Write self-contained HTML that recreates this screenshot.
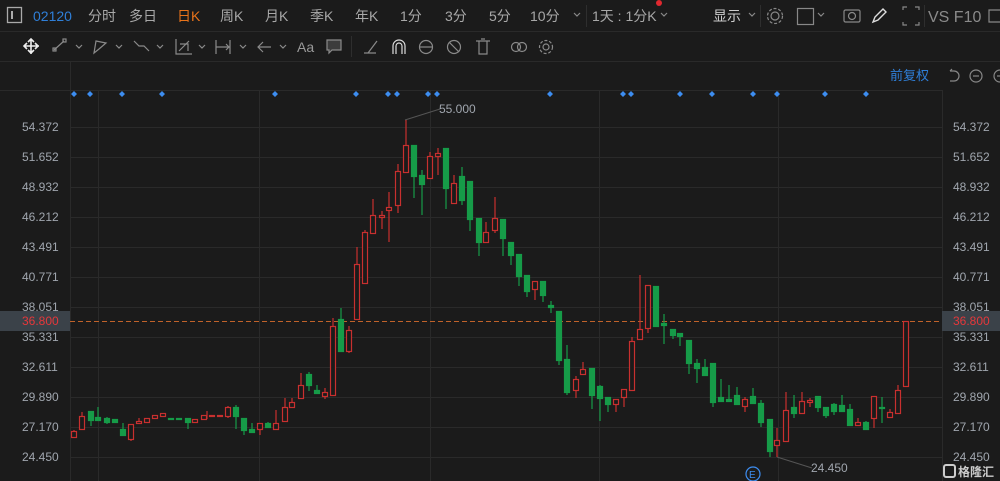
<!DOCTYPE html>
<html><head><meta charset="utf-8"><style>
html,body{margin:0;padding:0;background:#1b1b1b;width:1000px;height:481px;overflow:hidden}
body{font-family:"Liberation Sans","Noto Sans CJK SC",sans-serif}
svg{display:block}
</style></head><body>
<svg width="1000" height="481" viewBox="0 0 1000 481" xmlns="http://www.w3.org/2000/svg" font-family="Liberation Sans, Noto Sans CJK SC, sans-serif">
<rect width="1000" height="481" fill="#1b1b1b"/>
<line x1="0" y1="31.5" x2="1000" y2="31.5" stroke="#2a2a2a"/>
<line x1="0" y1="61.5" x2="1000" y2="61.5" stroke="#2a2a2a"/>
<rect x="7.5" y="7.5" width="14" height="15" fill="none" stroke="#aaa" stroke-width="1.3"/>
<line x1="12" y1="11" x2="12" y2="19" stroke="#ddd" stroke-width="1.5"/>
<g font-size="14" fill="#a8a8a8">
<text x="33" y="21" fill="#2f7fd8">02120</text>
<text x="88" y="21">分时</text>
<text x="129" y="21">多日</text>
<text x="177" y="21" fill="#e8731a">日K</text>
<text x="220" y="21">周K</text>
<text x="265" y="21">月K</text>
<text x="310" y="21">季K</text>
<text x="355" y="21">年K</text>
<text x="400" y="21">1分</text>
<text x="445" y="21">3分</text>
<text x="489" y="21">5分</text>
<text x="530" y="21">10分</text>
<text x="592" y="21">1天 : 1分K</text>
<text x="713" y="21" fill="#ccc">显示</text>
<text x="928" y="22" font-size="16" fill="#8a8a8a">VS F10</text>
</g>
<g fill="none" stroke="#888" stroke-width="1.2">
<path d="M574 13l3 3 3-3M661 13l3 3 3-3M749 13l3 3 3-3M818 13l3 3 3-3"/>
<circle cx="775" cy="16" r="4"/><circle cx="775" cy="16" r="7.5" stroke-dasharray="3 1.8"/>
<rect x="797.5" y="8.5" width="16" height="16"/>
<rect x="844" y="10" width="16" height="12" rx="1.5"/><circle cx="852" cy="16" r="3.5"/>
<path d="M903 10v-3h4M915 7h4v3M919 22v3h-4M907 25h-4v-3"/>
<path d="M989 10h12v12h-12z"/>
</g>
<path d="M873 22l2-5 8-8 3 3-8 8z" fill="none" stroke="#ddd" stroke-width="1.4"/>
<line x1="586.5" y1="5" x2="586.5" y2="27" stroke="#2e2e2e"/>
<line x1="760.5" y1="5" x2="760.5" y2="27" stroke="#2e2e2e"/>
<line x1="924.5" y1="5" x2="924.5" y2="27" stroke="#2e2e2e"/>
<circle cx="659" cy="3" r="3" fill="#e0282f"/>
<g fill="none" stroke="#8a8a8a" stroke-width="1.2">
<path d="M31 39v15M24 46h15M28 42l3-3 3 3M28 50l3 3 3-3M27 43l-3 3 3 3M35 43l3 3-3 3" stroke="#eee" stroke-width="1.6"/>
<path d="M54 50l10-9"/><rect x="53" y="48" width="3" height="3"/><rect x="63" y="39" width="3" height="3"/>
<path d="M94 53l2-12 10 2-7 6z"/>
<path d="M134 41l5 5 5 0 5 5"/>
<path d="M176 39v15h16M179 51l10-10M180 44h8v7"/>
<path d="M216 40v14M230 40v14M216 47h14M226 44l3 3-3 3"/>
<path d="M258 47h13M263 42l-5 5 5 5"/>
<path d="M327 40h14v10h-9l-3 3v-3h-2z" fill="#8a8a8a" fill-opacity=".3"/>
<path d="M368 53l9-12M364 53h12"/>
<path d="M393 54v-8a6 6 0 0 1 12 0v8M396 54v-8a3 3 0 0 1 6 0v8" stroke="#ddd"/>
<circle cx="426" cy="47" r="6.5"/><path d="M419 47h14"/>
<circle cx="454" cy="47" r="6.5"/><path d="M449 42l10 10"/>
<path d="M476 41h14M479 41v13h8v-13M481 39h4"/>
<circle cx="516" cy="47" r="4.5"/><circle cx="522" cy="47" r="4.5"/>
<circle cx="546" cy="47" r="3"/><circle cx="546" cy="47" r="6.5" stroke-dasharray="3 1.8"/>
<path d="M76 45l3 3 3-3M116 45l3 3 3-3M157 45l3 3 3-3M199 45l3 3 3-3M240 45l3 3 3-3M280 45l3 3 3-3"/>
</g>
<text x="297" y="52" font-size="14" fill="#999">Aa</text>
<line x1="351.5" y1="36" x2="351.5" y2="57" stroke="#2e2e2e"/>
<text x="890" y="80" font-size="13" fill="#2f7fd8">前复权</text>
<g fill="none" stroke="#888" stroke-width="1.2">
<path d="M950 71h4a5 5 0 0 1 0 10h-4M950 71l2-2"/>
<circle cx="976" cy="76" r="6"/><path d="M973 76h6"/>
<circle cx="1000" cy="76" r="6"/><path d="M997 76h6"/>
</g>
<line x1="0" y1="90.5" x2="942" y2="90.5" stroke="#2a2a2a"/>
<g stroke="#2a2a2a" stroke-width="1">
<path d="M71 127.5H942M71 157.5H942M71 187.5H942M71 217.5H942M71 247.5H942M71 277.5H942M71 307.5H942M71 337.5H942M71 367.5H942M71 397.5H942M71 427.5H942M71 457.5H942"/>
<path d="M70.5 62V481M98.5 90V481M259.5 90V481M430.5 90V481M599.5 90V481M778.5 90V481M942.5 90V481"/>
</g>
<g fill="#3d8df0">
<path d="M74 91l3 3-3 3-3-3zM90 91l3 3-3 3-3-3zM122 91l3 3-3 3-3-3zM162 91l3 3-3 3-3-3zM275 91l3 3-3 3-3-3zM356 91l3 3-3 3-3-3zM388 91l3 3-3 3-3-3zM397 91l3 3-3 3-3-3zM428 91l3 3-3 3-3-3zM437 91l3 3-3 3-3-3zM550 91l3 3-3 3-3-3zM623 91l3 3-3 3-3-3zM631 91l3 3-3 3-3-3zM680 91l3 3-3 3-3-3zM712 91l3 3-3 3-3-3zM753 91l3 3-3 3-3-3zM777 91l3 3-3 3-3-3zM825 91l3 3-3 3-3-3zM866 91l3 3-3 3-3-3z"/>
</g>
<g font-size="12" fill="#a0a6ae">
<text x="22" y="131">54.372</text><text x="22" y="161">51.652</text><text x="22" y="191">48.932</text><text x="22" y="221">46.212</text><text x="22" y="251">43.491</text><text x="22" y="281">40.771</text><text x="22" y="311">38.051</text><text x="22" y="341">35.331</text><text x="22" y="371">32.611</text><text x="22" y="401">29.890</text><text x="22" y="431">27.170</text><text x="22" y="461">24.450</text>
<text x="953" y="131">54.372</text><text x="953" y="161">51.652</text><text x="953" y="191">48.932</text><text x="953" y="221">46.212</text><text x="953" y="251">43.491</text><text x="953" y="281">40.771</text><text x="953" y="311">38.051</text><text x="953" y="341">35.331</text><text x="953" y="371">32.611</text><text x="953" y="401">29.890</text><text x="953" y="431">27.170</text><text x="953" y="461">24.450</text>
</g>
<rect x="0" y="311" width="70" height="20" fill="#3b4249"/>
<rect x="942" y="311" width="58" height="20" fill="#3b4249"/>
<text x="22" y="325" font-size="12" fill="#e5383b">36.800</text>
<text x="953" y="325" font-size="12" fill="#e5383b">36.800</text>
<line x1="70" y1="321.5" x2="942" y2="321.5" stroke="#c0622a" stroke-dasharray="5 3"/>
<path d="M405 120L440 109" stroke="#555" fill="none"/>
<text x="439" y="113" font-size="12" fill="#a0a6ae">55.000</text>
<path d="M777 457L812 468" stroke="#555" fill="none"/>
<text x="811" y="472" font-size="12" fill="#a0a6ae">24.450</text>
<circle cx="753" cy="474" r="7" fill="none" stroke="#3d8df0" stroke-width="1.2"/>
<text x="749" y="478" font-size="10" fill="#3d8df0">E</text>
<rect x="944" y="465" width="11" height="12" rx="2" fill="none" stroke="#ccc" stroke-width="2"/>
<text x="958" y="476" font-size="12" fill="#ccc" font-weight="bold">格隆汇</text>
<g stroke="#c8302f" fill="#1b1b1b" stroke-width="1.2">
<path d="M74 430V438M82 412V430M131 424V441M139 418V423M207 411V419M228 406V418M260 423V435M276 410V429M285 398V421M292 398V407M301 373V398M325 388V399M333 318V395M349 326V353M357 247V319M365 230V283M373 199V233M382 211V229M389 192V242M398 164V213M406 120V172M430 152V178M438 148V175M454 175V203M486 222V242M495 197V233M535 281V300M576 376V398M583 362V374M616 399V412M624 389V407M632 337V390M640 275V339M648 285V333M745 397V412M777 428V457M786 392V441M802 392V413M810 398V407M858 418V425M874 396V428M890 409V417M898 385V413"/>
<rect x="71.5" y="431.5" width="5" height="6"/><rect x="79.5" y="416.5" width="5" height="13"/><rect x="128.5" y="424.5" width="5" height="15"/><rect x="136.5" y="421.5" width="5" height="2"/><rect x="144.5" y="418.5" width="5" height="4"/><rect x="152.5" y="415.5" width="5" height="3"/><rect x="160.5" y="413.5" width="5" height="3"/><rect x="192.5" y="419.5" width="5" height="3"/><rect x="201.5" y="415.5" width="5" height="4"/><rect x="209.5" y="415.5" width="5" height="1"/><rect x="217.5" y="415.5" width="5" height="1"/><rect x="225.5" y="407.5" width="5" height="9"/><rect x="257.5" y="423.5" width="5" height="6"/><rect x="273.5" y="423.5" width="5" height="6"/><rect x="282.5" y="407.5" width="5" height="14"/><rect x="289.5" y="402.5" width="5" height="5"/><rect x="298.5" y="385.5" width="5" height="13"/><rect x="322.5" y="392.5" width="5" height="4"/><rect x="330.5" y="326.5" width="5" height="69"/><rect x="346.5" y="330.5" width="5" height="21"/><rect x="354.5" y="264.5" width="5" height="55"/><rect x="362.5" y="232.5" width="5" height="51"/><rect x="370.5" y="215.5" width="5" height="18"/><rect x="379.5" y="215.5" width="5" height="2"/><rect x="386.5" y="207.5" width="5" height="3"/><rect x="395.5" y="171.5" width="5" height="34"/><rect x="403.5" y="145.5" width="5" height="27"/><rect x="427.5" y="156.5" width="5" height="22"/><rect x="435.5" y="153.5" width="5" height="3"/><rect x="451.5" y="183.5" width="5" height="20"/><rect x="483.5" y="232.5" width="5" height="10"/><rect x="492.5" y="218.5" width="5" height="12"/><rect x="532.5" y="281.5" width="5" height="8"/><rect x="573.5" y="379.5" width="5" height="11"/><rect x="580.5" y="369.5" width="5" height="5"/><rect x="613.5" y="399.5" width="5" height="5"/><rect x="621.5" y="389.5" width="5" height="8"/><rect x="629.5" y="341.5" width="5" height="49"/><rect x="637.5" y="329.5" width="5" height="10"/><rect x="645.5" y="285.5" width="5" height="43"/><rect x="742.5" y="399.5" width="5" height="7"/><rect x="774.5" y="440.5" width="5" height="5"/><rect x="783.5" y="410.5" width="5" height="31"/><rect x="799.5" y="401.5" width="5" height="12"/><rect x="807.5" y="400.5" width="5" height="2"/><rect x="855.5" y="422.5" width="5" height="3"/><rect x="871.5" y="396.5" width="5" height="22"/><rect x="887.5" y="412.5" width="5" height="5"/><rect x="895.5" y="390.5" width="5" height="23"/><rect x="903.5" y="321.5" width="5" height="65"/>
</g>
<g stroke="#169b48" fill="#169b48" stroke-width="1.2">
<path d="M91 411V426M98 407V420M107 417V424M123 423V435M188 418V429M236 405V429M244 418V435M252 423V432M268 422V427M309 372V391M317 385V393M341 308V351M414 145V198M422 170V215M446 148V209M462 167V205M470 181V231M479 218V256M503 219V256M511 242V265M519 254V286M527 275V297M543 281V302M551 301V313M559 311V365M567 345V395M592 368V409M600 385V421M608 397V412M656 286V326M664 314V344M673 329V339M680 333V346M689 340V374M697 359V383M705 359V375M713 363V407M721 379V401M729 385V401M737 387V404M753 388V403M761 400V427M770 419V457M794 395V418M818 396V412M826 407V418M834 403V415M842 395V411M850 404V425M866 421V429M882 397V423"/>
<rect x="88.5" y="411.5" width="5" height="9"/><rect x="95.5" y="417.5" width="5" height="3"/><rect x="104.5" y="418.5" width="5" height="4"/><rect x="112.5" y="419.5" width="5" height="3"/><rect x="120.5" y="429.5" width="5" height="6"/><rect x="168.5" y="418.5" width="5" height="1"/><rect x="176.5" y="418.5" width="5" height="1"/><rect x="185.5" y="418.5" width="5" height="4"/><rect x="233.5" y="407.5" width="5" height="9"/><rect x="241.5" y="418.5" width="5" height="12"/><rect x="249.5" y="429.5" width="5" height="3"/><rect x="265.5" y="423.5" width="5" height="4"/><rect x="306.5" y="374.5" width="5" height="11"/><rect x="314.5" y="390.5" width="5" height="3"/><rect x="338.5" y="319.5" width="5" height="32"/><rect x="411.5" y="145.5" width="5" height="31"/><rect x="419.5" y="175.5" width="5" height="9"/><rect x="443.5" y="148.5" width="5" height="40"/><rect x="459.5" y="176.5" width="5" height="24"/><rect x="467.5" y="181.5" width="5" height="38"/><rect x="476.5" y="218.5" width="5" height="24"/><rect x="500.5" y="219.5" width="5" height="19"/><rect x="508.5" y="242.5" width="5" height="13"/><rect x="516.5" y="254.5" width="5" height="22"/><rect x="524.5" y="275.5" width="5" height="16"/><rect x="540.5" y="281.5" width="5" height="14"/><rect x="548.5" y="305.5" width="5" height="2"/><rect x="556.5" y="311.5" width="5" height="49"/><rect x="564.5" y="359.5" width="5" height="33"/><rect x="589.5" y="368.5" width="5" height="27"/><rect x="597.5" y="386.5" width="5" height="12"/><rect x="605.5" y="397.5" width="5" height="7"/><rect x="653.5" y="286.5" width="5" height="40"/><rect x="661.5" y="323.5" width="5" height="2"/><rect x="670.5" y="329.5" width="5" height="6"/><rect x="677.5" y="333.5" width="5" height="3"/><rect x="686.5" y="340.5" width="5" height="23"/><rect x="694.5" y="363.5" width="5" height="5"/><rect x="702.5" y="367.5" width="5" height="8"/><rect x="710.5" y="363.5" width="5" height="39"/><rect x="718.5" y="397.5" width="5" height="4"/><rect x="726.5" y="399.5" width="5" height="2"/><rect x="734.5" y="395.5" width="5" height="9"/><rect x="750.5" y="396.5" width="5" height="7"/><rect x="758.5" y="403.5" width="5" height="19"/><rect x="767.5" y="419.5" width="5" height="32"/><rect x="791.5" y="407.5" width="5" height="6"/><rect x="815.5" y="396.5" width="5" height="11"/><rect x="823.5" y="407.5" width="5" height="8"/><rect x="831.5" y="404.5" width="5" height="7"/><rect x="839.5" y="405.5" width="5" height="6"/><rect x="847.5" y="409.5" width="5" height="16"/><rect x="863.5" y="422.5" width="5" height="7"/><rect x="879.5" y="407.5" width="5" height="1"/>
</g>
</svg>
</body></html>
